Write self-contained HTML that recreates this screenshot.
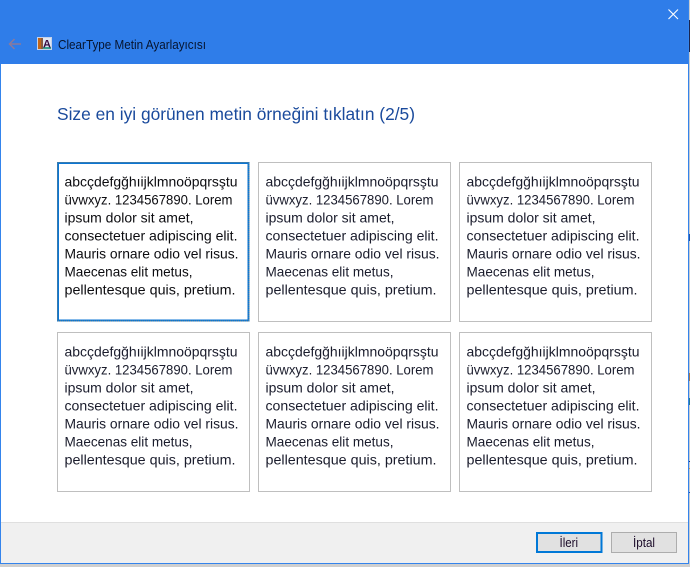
<!DOCTYPE html>
<html lang="tr">
<head>
<meta charset="utf-8">
<title>ClearType Metin Ayarlayıcısı</title>
<style>
html,body{margin:0;padding:0;width:690px;height:567px;overflow:hidden;background:#fff}
svg{display:block;font-family:"Liberation Sans",sans-serif}
.l{font-size:13.6px}
</style>
</head>
<body>
<svg width="690" height="567" viewBox="0 0 690 567" xmlns="http://www.w3.org/2000/svg">
<rect width="690" height="567" fill="#ffffff"/>
<!-- outside strip -->
<rect x="689" y="0" width="1" height="567" fill="#c9ccd1"/>
<rect x="689" y="20" width="1" height="32" fill="#1a2550"/>
<rect x="689" y="234" width="1" height="7" fill="#2255a8"/>
<rect x="689" y="373" width="1" height="8" fill="#a87a50"/>
<rect x="689" y="398" width="1" height="7" fill="#2a7a90"/>
<rect x="689" y="461" width="1" height="1" fill="#203a80"/>
<rect x="689" y="468" width="1" height="1" fill="#d09a50"/>
<rect x="689" y="492" width="1" height="1" fill="#2050b0"/>
<rect x="0" y="564" width="690" height="3" fill="#cfcfcf"/>
<!-- title bar -->
<rect x="0" y="0" width="688" height="64" fill="#2f7de9"/>
<!-- left, right, bottom borders -->
<rect x="0" y="64" width="1" height="500" fill="#3484ec"/>
<rect x="688" y="0" width="1" height="564" fill="#3484ec"/>
<rect x="0" y="563" width="689" height="1" fill="#3484ec"/>
<!-- close -->
<path d="M668.5 9.5L678 19M678 9.5L668.5 19" stroke="#ffffff" stroke-width="1.1" fill="none"/>
<!-- back arrow -->
<path d="M9.5 44H21M14.5 39L9.5 44L14.5 49" stroke="#8a7a9c" stroke-width="1.5" fill="none"/>
<!-- app icon -->
<rect x="37.5" y="37.5" width="14" height="12" fill="#dfe7f4" stroke="#c4d2ea"/>
<rect x="38" y="38" width="3" height="11" fill="#c2661a"/>
<rect x="41" y="38" width="2" height="11" fill="#8a5a40"/>
<rect x="43" y="47" width="8" height="2" fill="#3aa090"/>
<text x="47" y="47.5" font-size="11" font-weight="bold" fill="#3a0a40" text-anchor="middle">A</text>
<!-- title -->
<text x="58" y="49" font-size="13" fill="#06142e" textLength="148" lengthAdjust="spacingAndGlyphs">ClearType Metin Ayarlayıcısı</text>
<!-- heading -->
<text x="57" y="120" font-size="17.6" fill="#1a4a9c" textLength="358" lengthAdjust="spacingAndGlyphs">Size en iyi görünen metin örneğini tıklatın (2/5)</text>

<!-- box 1 selected -->
<rect x="58" y="163" width="190.5" height="157.5" fill="#fff" stroke="#0b76d4" stroke-width="2"/>
<rect x="57.5" y="162.5" width="191.5" height="158.5" fill="none" stroke="#c08a40" stroke-width="0.5" stroke-dasharray="1 1"/>
<g class="l" fill="#0c0c10">
<text x="64.5" y="186.5" textLength="173" lengthAdjust="spacingAndGlyphs">abcçdefgğhıijklmnoöpqrsştu</text>
<text x="64.5" y="204.5" textLength="168" lengthAdjust="spacingAndGlyphs">üvwxyz. 1234567890. Lorem</text>
<text x="64.5" y="222.5" textLength="129" lengthAdjust="spacingAndGlyphs">ipsum dolor sit amet,</text>
<text x="64.5" y="240.5" textLength="173" lengthAdjust="spacingAndGlyphs">consectetuer adipiscing elit.</text>
<text x="64.5" y="258.5" textLength="174" lengthAdjust="spacingAndGlyphs">Mauris ornare odio vel risus.</text>
<text x="64.5" y="276.5" textLength="128" lengthAdjust="spacingAndGlyphs">Maecenas elit metus,</text>
<text x="64.5" y="294.5" textLength="171" lengthAdjust="spacingAndGlyphs">pellentesque quis, pretium.</text>
</g>

<!-- box 2 -->
<rect x="258.5" y="162.5" width="192" height="159" fill="#fff" stroke="#bfbfbf"/>
<g class="l" fill="#1a1c2c">
<text x="265.5" y="186.5" textLength="173" lengthAdjust="spacingAndGlyphs">abcçdefgğhıijklmnoöpqrsştu</text>
<text x="265.5" y="204.5" textLength="168" lengthAdjust="spacingAndGlyphs">üvwxyz. 1234567890. Lorem</text>
<text x="265.5" y="222.5" textLength="129" lengthAdjust="spacingAndGlyphs">ipsum dolor sit amet,</text>
<text x="265.5" y="240.5" textLength="173" lengthAdjust="spacingAndGlyphs">consectetuer adipiscing elit.</text>
<text x="265.5" y="258.5" textLength="174" lengthAdjust="spacingAndGlyphs">Mauris ornare odio vel risus.</text>
<text x="265.5" y="276.5" textLength="128" lengthAdjust="spacingAndGlyphs">Maecenas elit metus,</text>
<text x="265.5" y="294.5" textLength="171" lengthAdjust="spacingAndGlyphs">pellentesque quis, pretium.</text>
</g>

<!-- box 3 -->
<rect x="459.5" y="162.5" width="192" height="159" fill="#fff" stroke="#bfbfbf"/>
<g class="l" fill="#1a1c2c">
<text x="466.5" y="186.5" textLength="173" lengthAdjust="spacingAndGlyphs">abcçdefgğhıijklmnoöpqrsştu</text>
<text x="466.5" y="204.5" textLength="168" lengthAdjust="spacingAndGlyphs">üvwxyz. 1234567890. Lorem</text>
<text x="466.5" y="222.5" textLength="129" lengthAdjust="spacingAndGlyphs">ipsum dolor sit amet,</text>
<text x="466.5" y="240.5" textLength="173" lengthAdjust="spacingAndGlyphs">consectetuer adipiscing elit.</text>
<text x="466.5" y="258.5" textLength="174" lengthAdjust="spacingAndGlyphs">Mauris ornare odio vel risus.</text>
<text x="466.5" y="276.5" textLength="128" lengthAdjust="spacingAndGlyphs">Maecenas elit metus,</text>
<text x="466.5" y="294.5" textLength="171" lengthAdjust="spacingAndGlyphs">pellentesque quis, pretium.</text>
</g>

<!-- box 4 -->
<rect x="57.5" y="332.5" width="192" height="159" fill="#fff" stroke="#bfbfbf"/>
<g class="l" fill="#1a1c2c">
<text x="64.5" y="356.5" textLength="173" lengthAdjust="spacingAndGlyphs">abcçdefgğhıijklmnoöpqrsştu</text>
<text x="64.5" y="374.5" textLength="168" lengthAdjust="spacingAndGlyphs">üvwxyz. 1234567890. Lorem</text>
<text x="64.5" y="392.5" textLength="129" lengthAdjust="spacingAndGlyphs">ipsum dolor sit amet,</text>
<text x="64.5" y="410.5" textLength="173" lengthAdjust="spacingAndGlyphs">consectetuer adipiscing elit.</text>
<text x="64.5" y="428.5" textLength="174" lengthAdjust="spacingAndGlyphs">Mauris ornare odio vel risus.</text>
<text x="64.5" y="446.5" textLength="128" lengthAdjust="spacingAndGlyphs">Maecenas elit metus,</text>
<text x="64.5" y="464.5" textLength="171" lengthAdjust="spacingAndGlyphs">pellentesque quis, pretium.</text>
</g>

<!-- box 5 -->
<rect x="258.5" y="332.5" width="192" height="159" fill="#fff" stroke="#bfbfbf"/>
<g class="l" fill="#1a1c2c">
<text x="265.5" y="356.5" textLength="173" lengthAdjust="spacingAndGlyphs">abcçdefgğhıijklmnoöpqrsştu</text>
<text x="265.5" y="374.5" textLength="168" lengthAdjust="spacingAndGlyphs">üvwxyz. 1234567890. Lorem</text>
<text x="265.5" y="392.5" textLength="129" lengthAdjust="spacingAndGlyphs">ipsum dolor sit amet,</text>
<text x="265.5" y="410.5" textLength="173" lengthAdjust="spacingAndGlyphs">consectetuer adipiscing elit.</text>
<text x="265.5" y="428.5" textLength="174" lengthAdjust="spacingAndGlyphs">Mauris ornare odio vel risus.</text>
<text x="265.5" y="446.5" textLength="128" lengthAdjust="spacingAndGlyphs">Maecenas elit metus,</text>
<text x="265.5" y="464.5" textLength="171" lengthAdjust="spacingAndGlyphs">pellentesque quis, pretium.</text>
</g>

<!-- box 6 -->
<rect x="459.5" y="332.5" width="192" height="159" fill="#fff" stroke="#bfbfbf"/>
<g class="l" fill="#1a1c2c">
<text x="466.5" y="356.5" textLength="173" lengthAdjust="spacingAndGlyphs">abcçdefgğhıijklmnoöpqrsştu</text>
<text x="466.5" y="374.5" textLength="168" lengthAdjust="spacingAndGlyphs">üvwxyz. 1234567890. Lorem</text>
<text x="466.5" y="392.5" textLength="129" lengthAdjust="spacingAndGlyphs">ipsum dolor sit amet,</text>
<text x="466.5" y="410.5" textLength="173" lengthAdjust="spacingAndGlyphs">consectetuer adipiscing elit.</text>
<text x="466.5" y="428.5" textLength="174" lengthAdjust="spacingAndGlyphs">Mauris ornare odio vel risus.</text>
<text x="466.5" y="446.5" textLength="128" lengthAdjust="spacingAndGlyphs">Maecenas elit metus,</text>
<text x="466.5" y="464.5" textLength="171" lengthAdjust="spacingAndGlyphs">pellentesque quis, pretium.</text>
</g>

<!-- footer -->
<rect x="1" y="522" width="687" height="41" fill="#f0f0f0"/>
<rect x="1" y="522" width="687" height="1" fill="#dfdfdf"/>
<rect x="537" y="533" width="64.5" height="19" fill="#e1e1e1" stroke="#0078d7" stroke-width="2"/>
<text x="559.5" y="547" font-size="13" fill="#1a0a28" textLength="18.5" lengthAdjust="spacingAndGlyphs">İleri</text>
<rect x="611.5" y="532.5" width="65" height="20" fill="#e1e1e1" stroke="#adadad"/>
<text x="633" y="547" font-size="13" fill="#1a0a28" textLength="22" lengthAdjust="spacingAndGlyphs">İptal</text>
</svg>
</body>
</html>
